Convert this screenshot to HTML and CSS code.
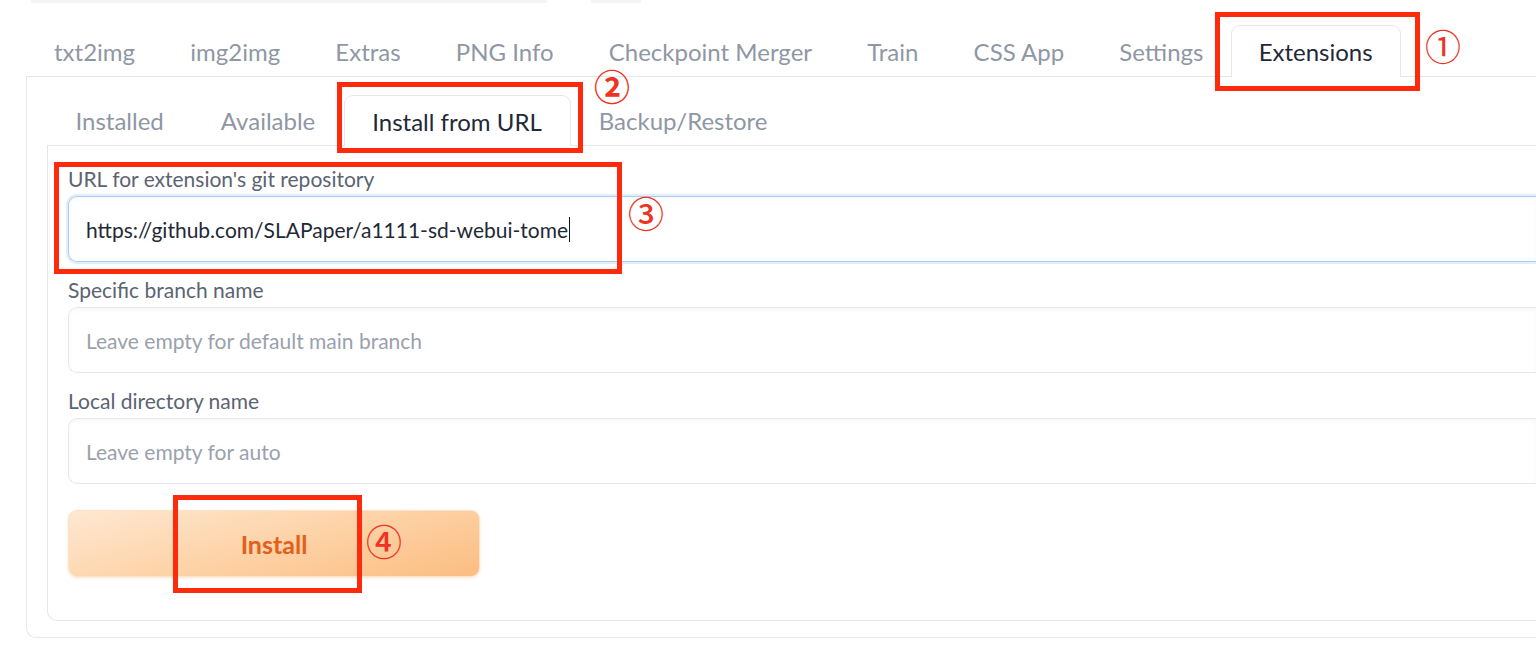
FILE: index.html
```html
<!DOCTYPE html>
<html lang="en">
<head>
<meta charset="utf-8">
<title>Extensions - Install from URL</title>
<link rel="stylesheet" href="styles.css">
</head>
<body>
<div class="page">
  <div class="top-strip">
    <span class="strip-bar strip-a"></span>
    <span class="strip-bar strip-b"></span>
  </div>

  <nav class="tab-nav main-nav">
    <span class="tab">txt2img</span>
    <span class="tab">img2img</span>
    <span class="tab">Extras</span>
    <span class="tab">PNG Info</span>
    <span class="tab">Checkpoint Merger</span>
    <span class="tab">Train</span>
    <span class="tab">CSS App</span>
    <span class="tab">Settings</span>
    <span class="tab active">Extensions</span>
  </nav>

  <section class="panel outer-panel">
    <nav class="tab-nav sub-nav">
      <span class="tab">Installed</span>
      <span class="tab">Available</span>
      <span class="tab active">Install from URL</span>
      <span class="tab">Backup/Restore</span>
    </nav>

    <div class="panel inner-panel">
      <div class="field">
        <label class="field-label">URL for extension's git repository</label>
        <div class="input focused"><span class="value">https://github.com/SLAPaper/a1111-sd-webui-tome</span><span class="caret"></span></div>
      </div>
      <div class="field">
        <label class="field-label">Specific branch name</label>
        <div class="input"><span class="placeholder">Leave empty for default main branch</span></div>
      </div>
      <div class="field">
        <label class="field-label">Local directory name</label>
        <div class="input"><span class="placeholder">Leave empty for auto</span></div>
      </div>
      <div class="actions">
        <button class="install-btn">Install</button>
      </div>
    </div>
  </section>

  <div class="mark box1"></div>
  <div class="mark box2"></div>
  <div class="mark box3"></div>
  <div class="mark box4"></div>
  <span class="num n1">①</span>
  <span class="num n2">②</span>
  <span class="num n3">③</span>
  <span class="num n4">④</span>
</div>
</body>
</html>
```
FILE: styles.css
```css
html, body {
  margin: 0;
  padding: 0;
  background: #ffffff;
}

.page {
  position: relative;
  padding-left: 26px;
  font-family: "Lato", "Source Sans Pro", sans-serif;
  color: #1f2937;
}

.top-strip {
  display: flex;
  height: 3px;
  gap: 44px;
  padding-left: 5px;
}
.strip-bar {
  display: block;
  height: 3px;
  background: #f4f4f5;
}
.strip-a { width: 516px; }
.strip-b { width: 50px; }

.tab-nav {
  display: flex;
  border-bottom: 1px solid #e5e7eb;
  box-sizing: border-box;
}

.main-nav {
  margin-top: 22px;
  height: 52px;
}

.tab {
  display: flex;
  align-items: center;
  padding: 0 27.2px 0 27px;
  font-size: 24px;
  color: #8f97a4;
  white-space: nowrap;
  border: 1px solid transparent;
  border-bottom: 0;
  margin-left: -1px;
}
.tab:first-child { margin-left: 0; }

.tab.active {
  color: #1f2937;
  background: #ffffff;
  border-color: #e5e7eb;
  border-radius: 9px 9px 0 0;
  margin-bottom: -1px;
}

.panel {
  border: 1px solid #e5e7eb;
  border-top: 0;
  border-right: 0;
  border-radius: 0 0 0 10px;
}

.outer-panel {
  padding: 18px 0 16px 20px;
}

.sub-nav {
  height: 51px;
}
.sub-nav .tab {
  padding: 0 28.5px 0 27.5px;
}

.inner-panel {
  padding: 21px 0 43px 20px;
  display: flex;
  flex-direction: column;
  gap: 16px;
}

.field {
  display: flex;
  flex-direction: column;
  gap: 5px;
}

.field-label {
  font-size: 21px;
  line-height: 24px;
  color: #5b6472;
}

.input {
  height: 66px;
  box-sizing: border-box;
  border: 1px solid #e5e7eb;
  border-right: 0;
  border-radius: 9px 0 0 9px;
  padding-left: 17px;
  display: flex;
  align-items: center;
  font-size: 21px;
  box-shadow: inset 0 2px 4px rgba(0, 0, 0, 0.035);
}

.input.focused {
  border-color: #a9cdf0;
  box-shadow: 0 0 0 2px rgba(205, 226, 250, 0.6), inset 0 2px 4px rgba(0, 0, 0, 0.03);
}

.value { color: #1f2937; }
.caret {
  display: inline-block;
  width: 1px;
  height: 25px;
  background: #111827;
  margin-left: 1px;
}
.placeholder { color: #9aa1ad; }

.actions {
  display: flex;
  margin-top: 10px;
}

.install-btn {
  width: 412px;
  height: 67px;
  border: 1px solid #fde3c7;
  border-radius: 9px;
  background: linear-gradient(165deg, #fee8d2 0%, #fdd3a8 50%, #fbbd82 100%);
  box-shadow: 0 1px 3px rgba(240, 150, 60, 0.25);
  font-family: "Lato", sans-serif;
  font-weight: 700;
  font-size: 25px;
  color: #e2601a;
  padding: 0;
}

.mark {
  position: absolute;
  border: 5px solid #ff2a0c;
  box-sizing: border-box;
}
.box1 { left: 1215px; top: 12px; width: 205px; height: 79px; }
.box2 { left: 337px; top: 82px; width: 246px; height: 71px; }
.box3 { left: 54px; top: 162px; width: 568px; height: 112px; }
.box4 { left: 173px; top: 495px; width: 189px; height: 98px; }

.num {
  position: absolute;
  width: 40px;
  height: 38px;
  display: flex;
  align-items: center;
  justify-content: center;
  font-family: "Noto Sans CJK JP", sans-serif;
  font-size: 36px;
  line-height: 1;
  color: #ee3322;
}
.n1 { left: 1423px; top: 26px; }
.n2 { left: 592px; top: 66px; font-weight: 700; }
.n3 { left: 626px; top: 193px; font-weight: 500; }
.n4 { left: 364px; top: 521px; font-weight: 500; }
```
